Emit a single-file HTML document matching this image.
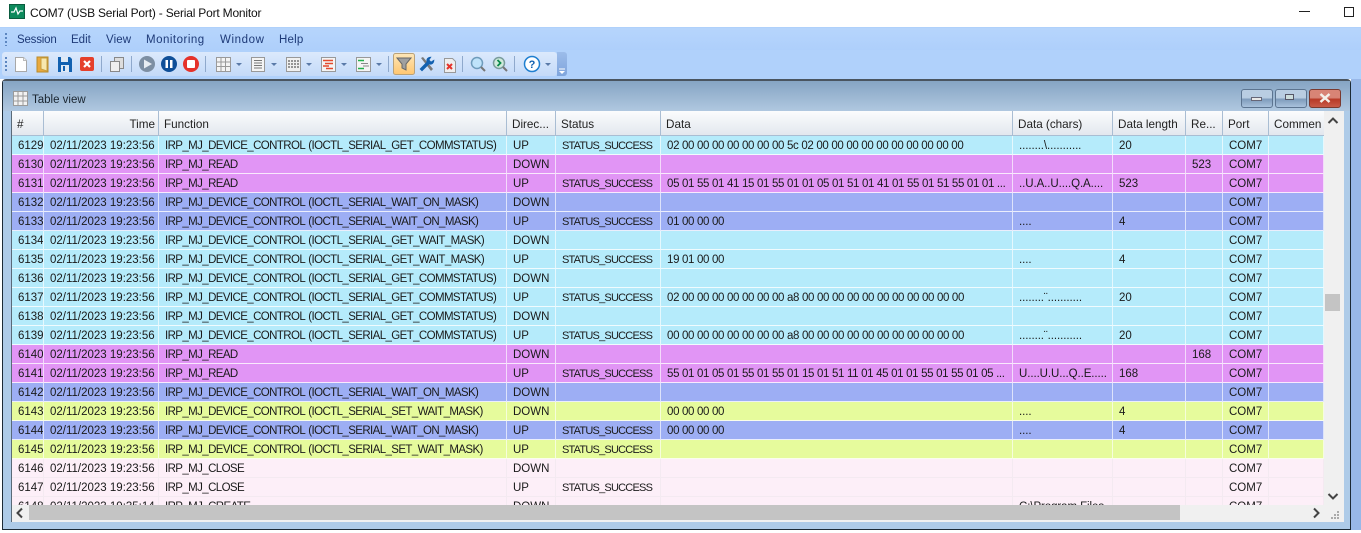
<!DOCTYPE html>
<html><head><meta charset="utf-8"><style>
html,body{margin:0;padding:0;width:1361px;height:533px;overflow:hidden;background:#fff}
body{position:relative;font-family:"Liberation Sans",sans-serif;font-size:12px;color:#1a1a1a;filter:blur(.3px)}
.a{position:absolute}
.m{position:absolute;top:34px;font-size:11.5px;color:#1e3a78;white-space:nowrap}
.h{position:absolute;top:111px;height:24px;line-height:27px;background:linear-gradient(#fbfcfd,#e2e7ee);border-right:1px solid #a9bdd3;border-bottom:1px solid #a9bdd3;overflow:hidden;white-space:nowrap;font-size:11.7px;color:#222}
table{border-collapse:separate;border-spacing:0;table-layout:fixed;width:1312px;position:absolute;left:0;top:0}
td{height:16px;padding:2px 0 0 6px;border-right:1px solid rgba(255,255,255,.65);border-bottom:1px solid rgba(255,255,255,.8);white-space:nowrap;overflow:hidden;font-size:11.5px;line-height:16px;box-sizing:content-box}
td:nth-child(3){letter-spacing:-.6px;word-spacing:1px}
td:nth-child(5){font-size:11px;letter-spacing:-.78px}
td:nth-child(6){letter-spacing:-.33px}
td:nth-child(7){letter-spacing:-.08px}
.c{background:#b5ebfb}.p{background:#e195f5}.b{background:#9daef4}.y{background:#e6fb9c}.k{background:#fdeff8}
.k td{border-color:#f4eaf1}
</style></head><body>
<svg class="a" style="left:9px;top:4px" width="16" height="15" viewBox="0 0 16 15"><rect x=".5" y=".5" width="15" height="14" fill="#0d8a5c" stroke="#0a5c3e"/><path d="M2 8h3l2-4 2 6 2-3h3" fill="none" stroke="#fff" stroke-width="1.2"/></svg>
<div class="a" style="left:30px;top:6px;font-size:12px;letter-spacing:-.2px;color:#111;white-space:nowrap">COM7 (USB Serial Port) - Serial Port Monitor</div>
<div class="a" style="left:1299px;top:11px;width:11px;height:1px;background:#222"></div>
<div class="a" style="left:1344px;top:7px;width:8px;height:8px;border:1.5px solid #222"></div>

<div class="a" style="left:0;top:27px;width:1361px;height:52px;background:#b0d1fb"></div>
<div class="a" style="left:0;top:28px;width:1361px;height:22px;background:linear-gradient(#b6d5fc,#aecffb)"></div>
<div class="a" style="left:5px;top:33px;width:2px;height:13px;background:repeating-linear-gradient(#5c86c0 0 2px,transparent 2px 4px)"></div>
<div class="m" style="left:17px;letter-spacing:-.2px">Session</div><div class="m" style="left:71px">Edit</div><div class="m" style="left:106px;letter-spacing:.1px">View</div><div class="m" style="left:146px;letter-spacing:.5px">Monitoring</div><div class="m" style="left:220px;letter-spacing:.6px">Window</div><div class="m" style="left:279px;letter-spacing:.2px">Help</div>

<div class="a" style="left:2px;top:52px;width:555px;height:24px;background:linear-gradient(#dbe9fc,#c4daf8);border-radius:3px"></div>
<div class="a" style="left:557px;top:52px;width:10px;height:24px;background:linear-gradient(#9cbcea,#7fa5dc);border-radius:0 3px 3px 0"></div>
<svg class="a" style="left:0;top:50px" width="570" height="28" viewBox="0 0 570 28">
<rect x="5" y="7" width="2" height="2" fill="#5c86c0"/><rect x="5" y="11" width="2" height="2" fill="#5c86c0"/><rect x="5" y="15" width="2" height="2" fill="#5c86c0"/><rect x="5" y="19" width="2" height="2" fill="#5c86c0"/>
<path d="M15.500 7.500h8l3 3v11h-11z" fill="#fff" stroke="#a8a8a8"/><path d="M23.500 7.500v3h3" fill="#eee" stroke="#bbb"/>
<path d="M37 7h11v15H37z" fill="#e9a93e" stroke="#b98a2a"/><path d="M41 8h6v13l-6-2z" fill="#f7e7ae" stroke="#c9a040"/>
<path d="M58 7h12l2 2v13H58z" fill="#1261b0"/><rect x="61" y="7" width="7" height="5" fill="#dfe9f5"/><rect x="61" y="15" width="8" height="7" fill="#dfe9f5"/><rect x="63" y="16" width="2" height="5" fill="#1261b0"/>
<rect x="80" y="7" width="14" height="14" rx="2" fill="#e5402b"/><path d="M84 11l6 6M90 11l-6 6" stroke="#fff" stroke-width="2.2"/>
<rect x="101" y="6" width="1" height="16" fill="#8fa9cc"/>
<rect x="114.500" y="7.500" width="9" height="11" fill="#ddd" stroke="#888"/><rect x="110.500" y="11.500" width="9" height="10" fill="#eee" stroke="#888"/>
<rect x="131" y="6" width="1" height="16" fill="#8fa9cc"/>
<circle cx="147" cy="14" r="8" fill="#7d8fa3"/><path d="M144 9.500l8 4.500-8 4.500z" fill="#e8edf2"/>
<circle cx="169" cy="14" r="8" fill="#0f4f98"/><rect x="165.500" y="10" width="2.500" height="8" fill="#fff"/><rect x="170" y="10" width="2.500" height="8" fill="#fff"/>
<circle cx="191" cy="14" r="8" fill="#e5322a"/><rect x="187" y="10" width="8" height="8" rx="1" fill="#fff"/>
<rect x="205" y="6" width="1" height="16" fill="#8fa9cc"/>
<path d="M216.500 7.500h14v14h-14zM216.500 12h14M216.500 16.500h14M221 7.500v14M225.500 7.500v14" fill="#f4f4f4" stroke="#9a9a9a"/><path d="M236 13h6l-3 3z" fill="#5a7aa8"/>
<path d="M251.500 7.500h13v14h-13z" fill="#f4f4f4" stroke="#999"/><path d="M254 10.500h8M254 13h8M254 15.500h8M254 18h8" stroke="#777"/><path d="M271 13h6l-3 3z" fill="#5a7aa8"/>
<path d="M286.500 7.500h14v14h-14z" fill="#f0f0f0" stroke="#999"/><path d="M288 11h11M288 14h11M288 17h11" stroke="#777" stroke-dasharray="2 1" stroke-width="1.500"/><path d="M306 13h6l-3 3z" fill="#5a7aa8"/>
<path d="M321.500 7.500h14v14h-14z" fill="#f4f4f4" stroke="#999"/><path d="M323 10.500h10M325 13.500h8M323 16h6M326 18.500h7" stroke="#e34a2c" stroke-width="1.500"/><path d="M341 13h6l-3 3z" fill="#5a7aa8"/>
<path d="M356.500 7.500h14v14h-14z" fill="#f4f4f4" stroke="#999"/><path d="M358 10.500h6M358 18.500h6" stroke="#22b14c" stroke-width="1.500"/><path d="M361 13.500h7M363 16h6" stroke="#888"/><path d="M376 13h6l-3 3z" fill="#5a7aa8"/>
<rect x="388" y="6" width="1" height="16" fill="#8fa9cc"/>
<defs><linearGradient id="g" x1="0" y1="0" x2="0" y2="1"><stop offset="0" stop-color="#fde6b8"/><stop offset="1" stop-color="#ffc670"/></linearGradient></defs>
<rect x="393.500" y="3.500" width="21" height="21" rx="2" fill="url(#g)" stroke="#b9a27a"/><path d="M397 8h14l-5 6v6l-4-2v-4z" fill="#a0a0a0" stroke="#666"/>
<path d="M421 8l2-1 10 12-2 2z" fill="#7a7a7a"/>
<path d="M420 19l7-7c-1-3 1-5 4-5l-2 3 2 2 3-2c0 3-2 5-5 4l-7 7z" fill="#1261b0" stroke="#1261b0" stroke-width=".6"/>
<path d="M444.500 8.500h8l3 3v11h-11z" fill="#eee" stroke="#999"/><path d="M447 14l5 5M452 14l-5 5" stroke="#e5322a" stroke-width="2"/>
<rect x="462" y="6" width="1" height="16" fill="#8fa9cc"/>
<circle cx="477" cy="13" r="5.500" fill="#bfe3fa" stroke="#6f9cbc" stroke-width="1.500"/><path d="M481 17l4 4" stroke="#777" stroke-width="2"/>
<circle cx="499" cy="13" r="5.500" fill="#cfeadb" stroke="#7a9c9c" stroke-width="1.500"/><path d="M497.500 10l3 3-3 3" fill="none" stroke="#0a8a4a" stroke-width="1.800"/><path d="M503 17l4 4" stroke="#777" stroke-width="2"/>
<rect x="514" y="6" width="1" height="16" fill="#8fa9cc"/>
<circle cx="532" cy="14" r="7.500" fill="#fff" stroke="#1f7fd0" stroke-width="1.500"/>
<text x="532" y="18" font-size="11" font-weight="bold" text-anchor="middle" fill="#1261b0" font-family="Liberation Sans">?</text>
<path d="M545 13h6l-3 3z" fill="#5a7aa8"/>
<path d="M559 19h6" stroke="#fff"/><path d="M559 21h6l-3 3z" fill="#fff"/>
</svg>

<div class="a" style="left:2px;top:79px;width:1349px;height:451px;background:#aecbe8;border:1px solid #1c2a36;border-top:2px solid #4a5560;border-radius:4px 4px 0 0;box-sizing:border-box"></div>
<div class="a" style="left:1351px;top:79px;width:10px;height:451px;background:#98b8e8"></div>
<div class="a" style="left:3px;top:81px;width:1347px;height:30px;background:linear-gradient(#86a5c4,#b0c8e0)"></div>
<svg class="a" style="left:13px;top:91px" width="15" height="15" viewBox="0 0 15 15"><path d="M.5.5h14v14H.5zM.5 5h14M.5 10h14M5 .5v14M10 .5v14" fill="#f2f2f2" stroke="#9a9a9a"/></svg>
<div class="a" style="left:32px;top:93px;font-size:11.500px;color:#1a2530;line-height:14px">Table view</div>
<div class="a" style="left:1241px;top:89px;width:30px;height:17px;border:1px solid #5c7490;border-radius:3px;background:linear-gradient(#b9cde2 45%,#7f9cbc 55%,#a9c2dc)"><div class="a" style="left:9px;top:7px;width:9px;height:2px;background:#e8e8e8;border:1px solid #667"></div></div>
<div class="a" style="left:1275px;top:89px;width:30px;height:17px;border:1px solid #5c7490;border-radius:3px;background:linear-gradient(#b9cde2 45%,#7f9cbc 55%,#a9c2dc)"><div class="a" style="left:9px;top:4px;width:7px;height:4px;border:1.5px solid #556;background:#cdd"></div></div>
<div class="a" style="left:1309px;top:89px;width:30px;height:17px;border:1px solid #7a3a30;border-radius:3px;background:linear-gradient(#d88476 45%,#b83a28 55%,#c85a48)"><svg class="a" style="left:9px;top:3px" width="12" height="10" viewBox="0 0 12 10"><path d="M1.500 1l9 8M10.500 1l-9 8" stroke="#f4f0ea" stroke-width="2.500"/></svg></div>

<div class="a" style="left:11px;top:111px;width:1332px;height:411px;background:#f0f0f0;border-left:1px solid #5a6a78"></div>
<div class="h" style="left:12px;width:26px;padding-left:5px">#</div>
<div class="h" style="left:44px;width:111px;text-align:right;padding-right:3px">Time</div>
<div class="h" style="left:159px;width:347px;text-indent:5px">Function</div>
<div class="h" style="left:507px;width:48px;text-indent:5px">Direc...</div>
<div class="h" style="left:556px;width:104px;text-indent:5px">Status</div>
<div class="h" style="left:661px;width:351px;text-indent:5px">Data</div>
<div class="h" style="left:1013px;width:99px;text-indent:5px">Data (chars)</div>
<div class="h" style="left:1113px;width:72px;text-indent:5px">Data length</div>
<div class="h" style="left:1186px;width:36px;text-indent:5px">Re...</div>
<div class="h" style="left:1223px;width:45px;text-indent:5px">Port</div>
<div class="h" style="left:1269px;width:55px;text-indent:5px;border-right:0">Commen</div>

<div class="a" style="left:12px;top:136px;width:1312px;height:368.500px;overflow:hidden;background:#fff">
<table><colgroup><col style="width:32px"><col style="width:115px"><col style="width:348px"><col style="width:49px"><col style="width:105px"><col style="width:352px"><col style="width:100px"><col style="width:73px"><col style="width:37px"><col style="width:46px"><col style="width:55px"></colgroup>
<tr class="c"><td>6129</td><td>02/11/2023 19:23:56</td><td>IRP_MJ_DEVICE_CONTROL (IOCTL_SERIAL_GET_COMMSTATUS)</td><td>UP</td><td>STATUS_SUCCESS</td><td>02 00 00 00 00 00 00 00 5c 02 00 00 00 00 00 00 00 00 00 00</td><td>........\...........</td><td>20</td><td></td><td>COM7</td><td></td></tr>
<tr class="p"><td>6130</td><td>02/11/2023 19:23:56</td><td>IRP_MJ_READ</td><td>DOWN</td><td></td><td></td><td></td><td></td><td>523</td><td>COM7</td><td></td></tr>
<tr class="p"><td>6131</td><td>02/11/2023 19:23:56</td><td>IRP_MJ_READ</td><td>UP</td><td>STATUS_SUCCESS</td><td>05 01 55 01 41 15 01 55 01 01 05 01 51 01 41 01 55 01 51 55 01 01 ...</td><td>..U.A..U....Q.A....</td><td>523</td><td></td><td>COM7</td><td></td></tr>
<tr class="b"><td>6132</td><td>02/11/2023 19:23:56</td><td>IRP_MJ_DEVICE_CONTROL (IOCTL_SERIAL_WAIT_ON_MASK)</td><td>DOWN</td><td></td><td></td><td></td><td></td><td></td><td>COM7</td><td></td></tr>
<tr class="b"><td>6133</td><td>02/11/2023 19:23:56</td><td>IRP_MJ_DEVICE_CONTROL (IOCTL_SERIAL_WAIT_ON_MASK)</td><td>UP</td><td>STATUS_SUCCESS</td><td>01 00 00 00</td><td>....</td><td>4</td><td></td><td>COM7</td><td></td></tr>
<tr class="c"><td>6134</td><td>02/11/2023 19:23:56</td><td>IRP_MJ_DEVICE_CONTROL (IOCTL_SERIAL_GET_WAIT_MASK)</td><td>DOWN</td><td></td><td></td><td></td><td></td><td></td><td>COM7</td><td></td></tr>
<tr class="c"><td>6135</td><td>02/11/2023 19:23:56</td><td>IRP_MJ_DEVICE_CONTROL (IOCTL_SERIAL_GET_WAIT_MASK)</td><td>UP</td><td>STATUS_SUCCESS</td><td>19 01 00 00</td><td>....</td><td>4</td><td></td><td>COM7</td><td></td></tr>
<tr class="c"><td>6136</td><td>02/11/2023 19:23:56</td><td>IRP_MJ_DEVICE_CONTROL (IOCTL_SERIAL_GET_COMMSTATUS)</td><td>DOWN</td><td></td><td></td><td></td><td></td><td></td><td>COM7</td><td></td></tr>
<tr class="c"><td>6137</td><td>02/11/2023 19:23:56</td><td>IRP_MJ_DEVICE_CONTROL (IOCTL_SERIAL_GET_COMMSTATUS)</td><td>UP</td><td>STATUS_SUCCESS</td><td>02 00 00 00 00 00 00 00 a8 00 00 00 00 00 00 00 00 00 00 00</td><td>........¨...........</td><td>20</td><td></td><td>COM7</td><td></td></tr>
<tr class="c"><td>6138</td><td>02/11/2023 19:23:56</td><td>IRP_MJ_DEVICE_CONTROL (IOCTL_SERIAL_GET_COMMSTATUS)</td><td>DOWN</td><td></td><td></td><td></td><td></td><td></td><td>COM7</td><td></td></tr>
<tr class="c"><td>6139</td><td>02/11/2023 19:23:56</td><td>IRP_MJ_DEVICE_CONTROL (IOCTL_SERIAL_GET_COMMSTATUS)</td><td>UP</td><td>STATUS_SUCCESS</td><td>00 00 00 00 00 00 00 00 a8 00 00 00 00 00 00 00 00 00 00 00</td><td>........¨...........</td><td>20</td><td></td><td>COM7</td><td></td></tr>
<tr class="p"><td>6140</td><td>02/11/2023 19:23:56</td><td>IRP_MJ_READ</td><td>DOWN</td><td></td><td></td><td></td><td></td><td>168</td><td>COM7</td><td></td></tr>
<tr class="p"><td>6141</td><td>02/11/2023 19:23:56</td><td>IRP_MJ_READ</td><td>UP</td><td>STATUS_SUCCESS</td><td>55 01 01 05 01 55 01 55 01 15 01 51 11 01 45 01 01 55 01 55 01 05 ...</td><td>U....U.U...Q..E.....</td><td>168</td><td></td><td>COM7</td><td></td></tr>
<tr class="b"><td>6142</td><td>02/11/2023 19:23:56</td><td>IRP_MJ_DEVICE_CONTROL (IOCTL_SERIAL_WAIT_ON_MASK)</td><td>DOWN</td><td></td><td></td><td></td><td></td><td></td><td>COM7</td><td></td></tr>
<tr class="y"><td>6143</td><td>02/11/2023 19:23:56</td><td>IRP_MJ_DEVICE_CONTROL (IOCTL_SERIAL_SET_WAIT_MASK)</td><td>DOWN</td><td></td><td>00 00 00 00</td><td>....</td><td>4</td><td></td><td>COM7</td><td></td></tr>
<tr class="b"><td>6144</td><td>02/11/2023 19:23:56</td><td>IRP_MJ_DEVICE_CONTROL (IOCTL_SERIAL_WAIT_ON_MASK)</td><td>UP</td><td>STATUS_SUCCESS</td><td>00 00 00 00</td><td>....</td><td>4</td><td></td><td>COM7</td><td></td></tr>
<tr class="y"><td>6145</td><td>02/11/2023 19:23:56</td><td>IRP_MJ_DEVICE_CONTROL (IOCTL_SERIAL_SET_WAIT_MASK)</td><td>UP</td><td>STATUS_SUCCESS</td><td></td><td></td><td></td><td></td><td>COM7</td><td></td></tr>
<tr class="k"><td>6146</td><td>02/11/2023 19:23:56</td><td>IRP_MJ_CLOSE</td><td>DOWN</td><td></td><td></td><td></td><td></td><td></td><td>COM7</td><td></td></tr>
<tr class="k"><td>6147</td><td>02/11/2023 19:23:56</td><td>IRP_MJ_CLOSE</td><td>UP</td><td>STATUS_SUCCESS</td><td></td><td></td><td></td><td></td><td>COM7</td><td></td></tr>
<tr class="k"><td>6148</td><td>02/11/2023 19:35:14</td><td>IRP_MJ_CREATE</td><td>DOWN</td><td></td><td></td><td>C:\Program Files</td><td></td><td></td><td>COM7</td><td></td></tr>
</table></div>

<div class="a" style="left:1325px;top:294px;width:15px;height:17px;background:#c4c4c4"></div>
<svg class="a" style="left:1326px;top:116px" width="14" height="10" viewBox="0 0 14 10"><path d="M2.500 7L7 2.500 11.500 7" fill="none" stroke="#444" stroke-width="2"/></svg>
<svg class="a" style="left:1326px;top:491px" width="14" height="10" viewBox="0 0 14 10"><path d="M2.500 3L7 7.500 11.500 3" fill="none" stroke="#444" stroke-width="2"/></svg>
<div class="a" style="left:29px;top:505px;width:1151px;height:15px;background:#c4c4c4"></div>
<svg class="a" style="left:15px;top:506px" width="10" height="14" viewBox="0 0 10 14"><path d="M7 2.500L2.500 7 7 11.500" fill="none" stroke="#444" stroke-width="2"/></svg>
<svg class="a" style="left:1311px;top:506px" width="10" height="14" viewBox="0 0 10 14"><path d="M3 2.500L7.500 7 3 11.500" fill="none" stroke="#444" stroke-width="2"/></svg>
<svg class="a" style="left:1330px;top:510px" width="10" height="10" viewBox="0 0 10 10" fill="#aaa"><rect x="7" y="1" width="2" height="2"/><rect x="4" y="4" width="2" height="2"/><rect x="7" y="4" width="2" height="2"/><rect x="1" y="7" width="2" height="2"/><rect x="4" y="7" width="2" height="2"/><rect x="7" y="7" width="2" height="2"/></svg>
</body></html>
